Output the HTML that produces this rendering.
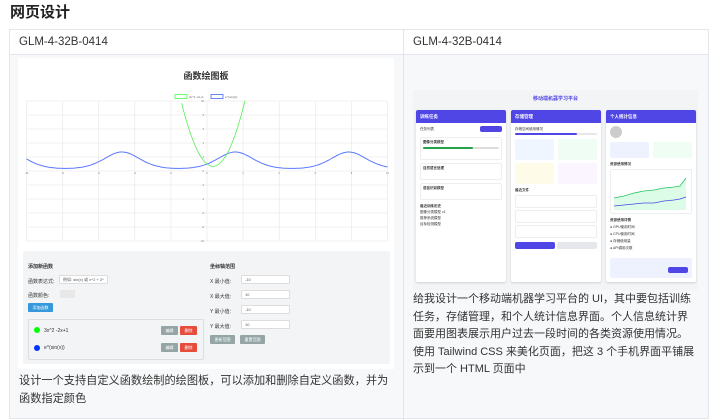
<!DOCTYPE html>
<html><head><meta charset="utf-8">
<style>
*{box-sizing:border-box;margin:0;padding:0}
body{width:720px;height:409px;overflow:hidden;background:#fff;font-family:"Liberation Sans","Noto Sans CJK SC",sans-serif;color:#222;position:relative}
.abs{position:absolute}
h1{position:absolute;left:10px;top:1px;font-size:15px;font-weight:bold;color:#222}
.tbl{position:absolute;left:9px;top:29px;width:700px;height:390px;border:1px solid #e3e6ea;background:#f7f8fa}
.hdr{position:absolute;left:0;top:0;width:698px;height:25px;background:#fff;border-bottom:1px solid #e3e6ea}
.hdr span{position:absolute;top:6px;font-size:11.5px;color:#333}
.vd{position:absolute;left:393px;top:0;width:1px;height:390px;background:#e3e6ea}
.t{font-size:5px;color:#333}
.btn{position:absolute;height:9px;border-radius:1px;font-size:4px;color:#fff;text-align:center;line-height:9px}
.inp{position:absolute;height:9px;background:#fff;border:1px solid #ddd;border-radius:1px;font-size:4px;line-height:7px;padding-left:3px;color:#555}
.desc{position:absolute;font-size:11px;line-height:17.5px;color:#333}
.scr{position:absolute;top:110px;width:90px;height:172px;background:#fff;border-radius:2px;box-shadow:0 1px 2px rgba(0,0,0,.15)}
.scr .bar{height:13px;background:#4f46e5;border-radius:2px 2px 0 0;color:#fff;font-size:4.5px;padding:4px 4px;font-weight:bold}
.s{position:absolute;font-size:3.5px;color:#333}
.box{position:absolute;border-radius:2px}
</style></head><body>
<h1>网页设计</h1>
<div class="tbl">
 <div class="hdr"><span style="left:9px">GLM-4-32B-0414</span><span style="left:403px">GLM-4-32B-0414</span></div>
 <div class="vd"></div>
</div>

<div class="abs" style="left:18px;top:58px;width:376px;height:311px;background:#fff"></div>
<div class="abs" style="left:18px;top:69px;width:376px;text-align:center;font-size:9px;font-weight:bold;color:#333">函数绘图板</div>
<svg class="abs" style="left:18px;top:90px" width="376" height="156" viewBox="18 90 376 156">
 <g stroke="#e6e6e6" stroke-width="0.6" id="grid"></g>
 <rect x="175" y="94.5" width="12" height="4" fill="none" stroke="#4f4" stroke-width="0.8"/>
 <text x="189" y="98" font-size="3" fill="#666">3x^2 -2x+1</text>
 <rect x="211" y="94.5" width="12" height="4" fill="none" stroke="#46f" stroke-width="0.8"/>
 <text x="225" y="98" font-size="3" fill="#666">e^(sin(x))</text>
 <path id="pb" fill="none" stroke="#5a78ff" stroke-width="1"/>
 <path id="pg" fill="none" stroke="#55ee55" stroke-width="0.8"/>
</svg>
<script>
(function(){
var X=function(x){return 207+x*18.05},Y=function(y){return 171-y*7};
var g=document.getElementById('grid'),s='';
for(var i=-10;i<=10;i+=2){s+='<line x1="'+X(i)+'" y1="101" x2="'+X(i)+'" y2="241"/>';s+='<text x="'+X(i)+'" y="174" font-size="2.5" fill="#777" stroke="none" text-anchor="middle">'+i+'</text>';}
for(var j=-10;j<=10;j+=2){s+='<line x1="26" y1="'+Y(j)+'" x2="387" y2="'+Y(j)+'"/>';s+='<text x="204" y="'+(Y(j)+1)+'" font-size="2.5" fill="#777" stroke="none" text-anchor="end">'+j+'</text>';}
g.innerHTML=s;
var d='';for(var x=-10;x<=10.001;x+=0.1){d+=(d?'L':'M')+X(x).toFixed(1)+' '+Y(Math.exp(Math.sin(x))).toFixed(1);}
document.getElementById('pb').setAttribute('d',d);
d='';for(x=-1.5;x<=2.2;x+=0.05){var y=3*x*x-2*x+1;if(y>10.2)continue;d+=(d?'L':'M')+X(x).toFixed(1)+' '+Y(y).toFixed(1);}
document.getElementById('pg').setAttribute('d',d);
})();
</script>
<div class="abs" style="left:23px;top:251px;width:367px;height:113px;background:#f3f4f6;border-radius:2px"></div>
<div class="abs t" style="left:28px;top:263px;font-weight:bold">添加新函数</div>
<div class="abs t" style="left:28px;top:278px">函数表达式:</div>
<div class="inp" style="left:59px;top:275px;width:49px">例如: sin(x) 或 x^2 + 2*</div>
<div class="abs t" style="left:28px;top:292px">函数颜色:</div>
<div class="abs" style="left:60px;top:290px;width:15px;height:8px;background:#e8e8e8"></div>
<div class="btn" style="left:28px;top:303px;width:25px;background:#3498db">添加函数</div>
<div class="abs" style="left:28px;top:319px;width:176px;height:41px;border:1px solid #ddd;border-radius:2px"></div>
<div class="abs" style="left:34px;top:327px;width:6px;height:6px;border-radius:50%;background:#0f0"></div>
<div class="abs t" style="left:44px;top:328px">3x^2 -2x+1</div>
<div class="btn" style="left:161px;top:326px;width:17px;background:#95a5a6">编辑</div>
<div class="btn" style="left:180px;top:326px;width:17px;background:#e74c3c">删除</div>
<div class="abs" style="left:34px;top:345px;width:6px;height:6px;border-radius:50%;background:#03f"></div>
<div class="abs t" style="left:44px;top:345px">e^(sin(x))</div>
<div class="btn" style="left:161px;top:343px;width:17px;background:#95a5a6">编辑</div>
<div class="btn" style="left:180px;top:343px;width:17px;background:#e74c3c">删除</div>
<div class="abs t" style="left:210px;top:263px;font-weight:bold">坐标轴范围</div>
<div class="abs t" style="left:210px;top:278px">X 最小值:</div><div class="inp" style="left:241px;top:275px;width:49px">-10</div>
<div class="abs t" style="left:210px;top:293px">X 最大值:</div><div class="inp" style="left:241px;top:290px;width:49px">10</div>
<div class="abs t" style="left:210px;top:308px">Y 最小值:</div><div class="inp" style="left:241px;top:305px;width:49px">-10</div>
<div class="abs t" style="left:210px;top:323px">Y 最大值:</div><div class="inp" style="left:241px;top:320px;width:49px">10</div>
<div class="btn" style="left:210px;top:335px;width:25px;background:#95a5a6">更新范围</div>
<div class="btn" style="left:240px;top:335px;width:25px;background:#95a5a6">重置范围</div>
<div class="desc" style="left:19px;top:373px;width:380px;font-size:11.2px;white-space:nowrap">设计一个支持自定义函数绘制的绘图板，可以添加和删除自定义函数，并为<br>函数指定颜色</div>

<div class="abs" style="left:413px;top:90px;width:285px;height:200px;background:#f3f4f6"></div>
<div class="abs" style="left:413px;top:95px;width:285px;text-align:center;font-size:5px;font-weight:bold;color:#4f46e5">移动端机器学习平台</div>
<div class="scr" style="left:416px"><div class="bar">训练任务</div>
 <div class="s" style="left:4px;top:17px">任务列表</div><div class="box" style="left:64px;top:16px;width:22px;height:6px;background:#4f46e5"></div>
 <div class="box" style="left:4px;top:27px;width:82px;height:23px;border:1px solid #eee"></div>
 <div class="s" style="left:7px;top:30px;font-weight:bold">图像分类模型</div>
 <div class="box" style="left:7px;top:37px;width:76px;height:1.5px;background:#ddd"></div><div class="box" style="left:7px;top:37px;width:50px;height:1.5px;background:#22a34a"></div>
 <div class="box" style="left:4px;top:53px;width:82px;height:17px;border:1px solid #eee"></div>
 <div class="s" style="left:7px;top:56px;font-weight:bold">自然语言处理</div>
 <div class="box" style="left:4px;top:73px;width:82px;height:17px;border:1px solid #eee"></div>
 <div class="s" style="left:7px;top:76px;font-weight:bold">语音识别模型</div>
 <div class="s" style="left:4px;top:94px;font-weight:bold">最近训练历史</div>
 <div class="s" style="left:4px;top:100px">图像分类模型 v1</div><div class="s" style="left:4px;top:106px">推荐系统模型</div><div class="s" style="left:4px;top:112px">目标检测模型</div>
</div>
<div class="scr" style="left:511px"><div class="bar">存储管理</div>
 <div class="s" style="left:4px;top:17px">存储空间使用情况</div>
 <div class="box" style="left:4px;top:23px;width:82px;height:2px;background:#e5e7eb"></div><div class="box" style="left:4px;top:23px;width:62px;height:2px;background:#4f46e5"></div>
 <div class="box" style="left:4px;top:29px;width:39px;height:21px;background:#eff6ff"></div>
 <div class="box" style="left:47px;top:29px;width:39px;height:21px;background:#f0fdf4"></div>
 <div class="box" style="left:4px;top:53px;width:39px;height:21px;background:#fefce8"></div>
 <div class="box" style="left:47px;top:53px;width:39px;height:21px;background:#faf5ff"></div>
 <div class="s" style="left:4px;top:78px;font-weight:bold">最近文件</div>
 <div class="box" style="left:4px;top:85px;width:82px;height:13px;border:1px solid #eee"></div>
 <div class="box" style="left:4px;top:100px;width:82px;height:13px;border:1px solid #eee"></div>
 <div class="box" style="left:4px;top:115px;width:82px;height:13px;border:1px solid #eee"></div>
 <div class="box" style="left:4px;top:132px;width:40px;height:7px;background:#4f46e5"></div>
 <div class="box" style="left:46px;top:132px;width:40px;height:7px;background:#e5e7eb"></div>
</div>
<div class="scr" style="left:606px"><div class="bar">个人统计信息</div>
 <div class="box" style="left:4px;top:16px;width:12px;height:12px;border-radius:50%;background:#ccc"></div>
 <div class="box" style="left:4px;top:32px;width:39px;height:16px;background:#eef2ff"></div>
 <div class="box" style="left:47px;top:32px;width:39px;height:16px;background:#f0fdf4"></div>
 <div class="s" style="left:4px;top:52px;font-weight:bold">资源使用情况</div>
 <div class="box" style="left:4px;top:59px;width:82px;height:45px;border:1px solid #eee"></div>
 <svg class="abs" style="left:8px;top:66px" width="76" height="34"><path d="M0 22 L10 20 L20 17 L30 15 L40 14 L50 12 L60 11 L66 10 L72 2 L72 34 L0 34Z" fill="#dcfce7"/><polyline points="0,22 10,20 20,17 30,15 40,14 50,12 60,11 66,10 72,2" fill="none" stroke="#22c55e" stroke-width="0.8"/><polyline points="0,30 10,29 20,28 30,27 40,27 50,25 60,24 66,23 72,21" fill="none" stroke="#4f46e5" stroke-width="0.8"/></svg>
 <div class="s" style="left:4px;top:108px;font-weight:bold">资源使用详情</div>
 <div class="s" style="left:4px;top:115px">● GPU使用时间</div><div class="s" style="left:4px;top:122px">● CPU使用时间</div><div class="s" style="left:4px;top:129px">● 存储使用量</div><div class="s" style="left:4px;top:136px">● API调用次数</div>
 <div class="box" style="left:4px;top:148px;width:82px;height:20px;background:#eef2ff"></div>
 <div class="box" style="left:62px;top:157px;width:20px;height:6px;background:#4f46e5"></div>
</div>
<div class="desc" style="left:413px;top:291px;width:282px">给我设计一个移动端机器学习平台的 UI，其中要包括训练任务，存储管理，和个人统计信息界面。个人信息统计界面要用图表展示用户过去一段时间的各类资源使用情况。使用 Tailwind CSS 来美化页面，把这 3 个手机界面平铺展示到一个 HTML 页面中</div>
</body></html>
